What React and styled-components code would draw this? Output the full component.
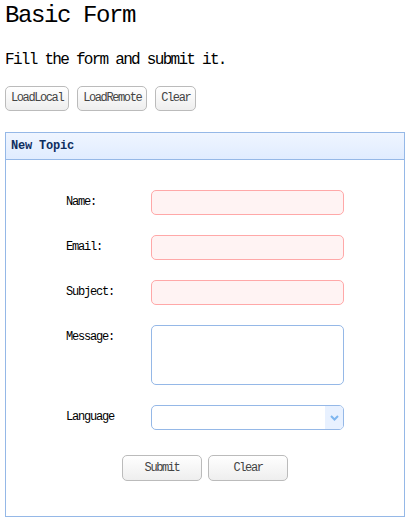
import React from "react";
import styled, { createGlobalStyle } from "styled-components";

const GlobalStyle = createGlobalStyle`
  html, body { margin: 0; padding: 0; background: #fff; }
  body { font-family: "Liberation Mono", "DejaVu Sans Mono", monospace; color: #000; }
`;

const Page = styled.div`
  width: 400px;
  padding: 0 0 0 5px;
`;

const Title = styled.h2`
  margin: 0;
  padding-top: 2px;
  font-size: 24px;
  line-height: 28px;
  font-weight: normal;
  letter-spacing: -1.4px;
`;

const Intro = styled.p`
  margin: 20px 0 0;
  font-size: 16px;
  line-height: 20px;
  letter-spacing: -1.72px;
`;

const Toolbar = styled.div`
  display: flex;
  gap: 8px;
  margin-top: 16px;
`;

const Btn = styled.button`
  box-sizing: border-box;
  height: ${(p) => (p.$wide ? 26 : 25)}px;
  width: ${(p) => (p.$wide ? "80px" : "auto")};
  padding: 0 5px;
  border: 1px solid #bbb;
  border-radius: 5px;
  background: linear-gradient(to bottom, #ffffff 0%, #eeeeee 100%);
  color: #444;
  font-family: "Liberation Mono", monospace;
  font-size: 12px;
  letter-spacing: -1.4px;
  line-height: 23px;
  cursor: pointer;
`;

const Panel = styled.div`
  margin-top: 21px;
  width: 400px;
  box-sizing: border-box;
`;

const PanelHeader = styled.div`
  height: 26px;
  border: 1px solid #95b8e7;
  background: linear-gradient(to bottom, #eff5ff 0%, #e0ecff 100%);
  display: flex;
  align-items: center;
  padding-left: 5px;
  font-size: 12px;
  font-weight: bold;
  color: #0e2d5f;
  letter-spacing: -0.2px;
`;

const PanelBody = styled.div`
  border: 1px solid #95b8e7;
  border-top: none;
  padding: 30px 60px 35px;
`;

const FormGrid = styled.div`
  display: grid;
  grid-template-columns: 85px 193px;
  row-gap: 20px;
`;

const Label = styled.div`
  font-size: 12px;
  letter-spacing: -1.2px;
  line-height: 25px;
`;

const Field = styled.div`
  box-sizing: border-box;
  height: ${(p) => p.$h || 25}px;
  border: 1px solid ${(p) => (p.$invalid ? "#ffa8a8" : "#95b8e7")};
  background: ${(p) => (p.$invalid ? "#fff3f3" : "#fff")};
  border-radius: 5px;
  display: flex;
  justify-content: flex-end;
  overflow: hidden;
`;

const ArrowBox = styled.div`
  width: 18px;
  height: 100%;
  background: #e8f1ff;
  display: flex;
  align-items: center;
  justify-content: center;
`;

const Actions = styled.div`
  display: flex;
  justify-content: center;
  gap: 6px;
  margin-top: 25px;
`;

const Chevron = () => (
  <svg width="9" height="6" viewBox="0 0 9 6">
    <polyline points="1,1 4.5,4.5 8,1" fill="none" stroke="#7eb6ef" strokeWidth="2" />
  </svg>
);

export default function App() {
  return (
    <>
      <GlobalStyle />
      <Page>
        <Title>Basic Form</Title>
        <Intro>Fill the form and submit it.</Intro>
        <Toolbar>
          <Btn>LoadLocal</Btn>
          <Btn>LoadRemote</Btn>
          <Btn>Clear</Btn>
        </Toolbar>
        <Panel>
          <PanelHeader>New Topic</PanelHeader>
          <PanelBody>
            <FormGrid>
              <Label>Name:</Label>
              <Field $invalid />
              <Label>Email:</Label>
              <Field $invalid />
              <Label>Subject:</Label>
              <Field $invalid />
              <Label>Message:</Label>
              <Field $h={60} />
              <Label>Language</Label>
              <Field>
                <ArrowBox>
                  <Chevron />
                </ArrowBox>
              </Field>
            </FormGrid>
            <Actions>
              <Btn $wide>Submit</Btn>
              <Btn $wide>Clear</Btn>
            </Actions>
          </PanelBody>
        </Panel>
      </Page>
    </>
  );
}
